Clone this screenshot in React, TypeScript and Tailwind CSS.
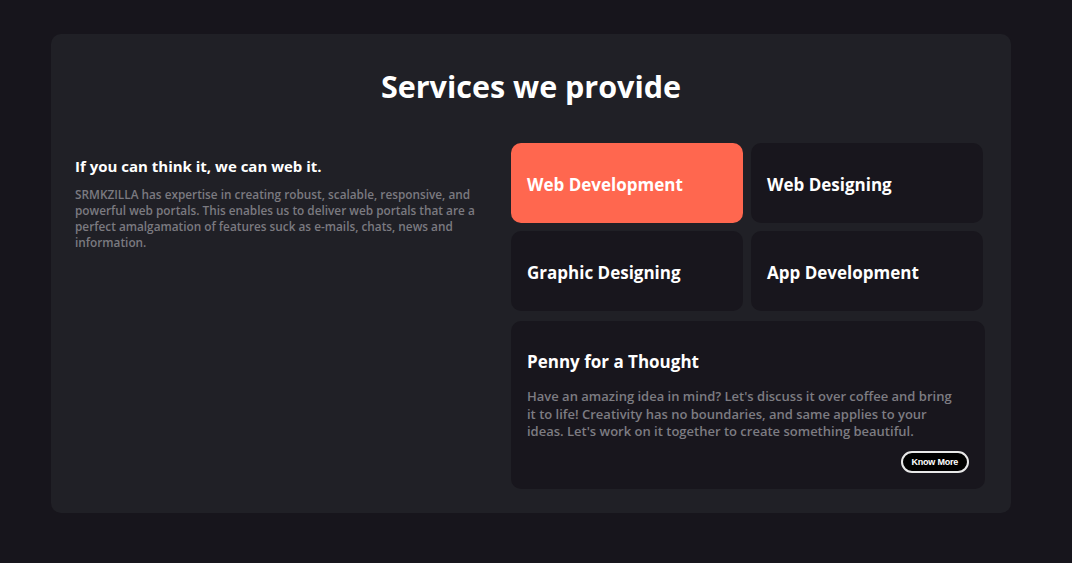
export default function App() {
  const tiles = ["Web Development", "Web Designing", "Graphic Designing", "App Development"];
  return (
    <div className="min-h-[563px] w-full bg-[#17151c] pl-[51px] pr-[61px] pt-[34px] pb-[50px]" style={{ fontFamily: '"Open Sans", "Noto Sans", sans-serif' }}>
      <div className="rounded-[10px] bg-[#202026] px-6 pt-[30px] pb-6">
        <h1 className="text-center text-[30.5px] font-bold leading-[44px] text-white">Services we provide</h1>
        <div className="mt-[35px] flex">
          <div className="w-[412px] pt-[12px]">
            <h2 className="text-[15px] font-bold leading-[22px] text-white">If you can think it, we can web it.</h2>
            <p className="mt-[9px] text-[11.8px] font-semibold leading-4 text-[#7b7a80]">
              SRMKZILLA has expertise in creating robust, scalable, responsive, and powerful web portals. This enables us to deliver web portals that are a perfect amalgamation of features suck as e-mails, chats, news and information.
            </p>
          </div>
          <div className="ml-6 w-[474px]">
            <div className="grid w-[472px] grid-cols-2 gap-2">
              {tiles.map((t, i) => (
                <div
                  key={t}
                  className={
                    i === 0
                      ? "flex h-20 items-center rounded-[10px] bg-[#ff674f] px-4 pt-[3px] text-[17px] font-bold text-white"
                      : "flex h-20 items-center rounded-[10px] bg-[#18161d] px-4 pt-[3px] text-[17px] font-bold text-white"
                  }
                >
                  {t}
                </div>
              ))}
            </div>
            <div className="mt-[10px] rounded-[10px] bg-[#18161d] px-4 pt-[29px] pb-4">
              <h3 className="text-[17px] font-bold leading-6 text-white">Penny for a Thought</h3>
              <p className="mt-[14px] max-w-[425px] text-[13px] font-semibold leading-[17.5px] text-[#7d7c82]">
                Have an amazing idea in mind? Let's discuss it over coffee and bring it to life! Creativity has no boundaries, and same applies to your ideas. Let's work on it together to create something beautiful.
              </p>
              <div className="mt-[10px] flex justify-end">
                <button
                  className="rounded-full border-2 border-[#e8e8e8] bg-black px-[9px] py-[3px] text-[9px] font-bold leading-3 tracking-tight text-white"
                  style={{ fontFamily: '"Liberation Sans", Arial, sans-serif' }}
                >
                  Know More
                </button>
              </div>
            </div>
          </div>
        </div>
      </div>
    </div>
  );
}
